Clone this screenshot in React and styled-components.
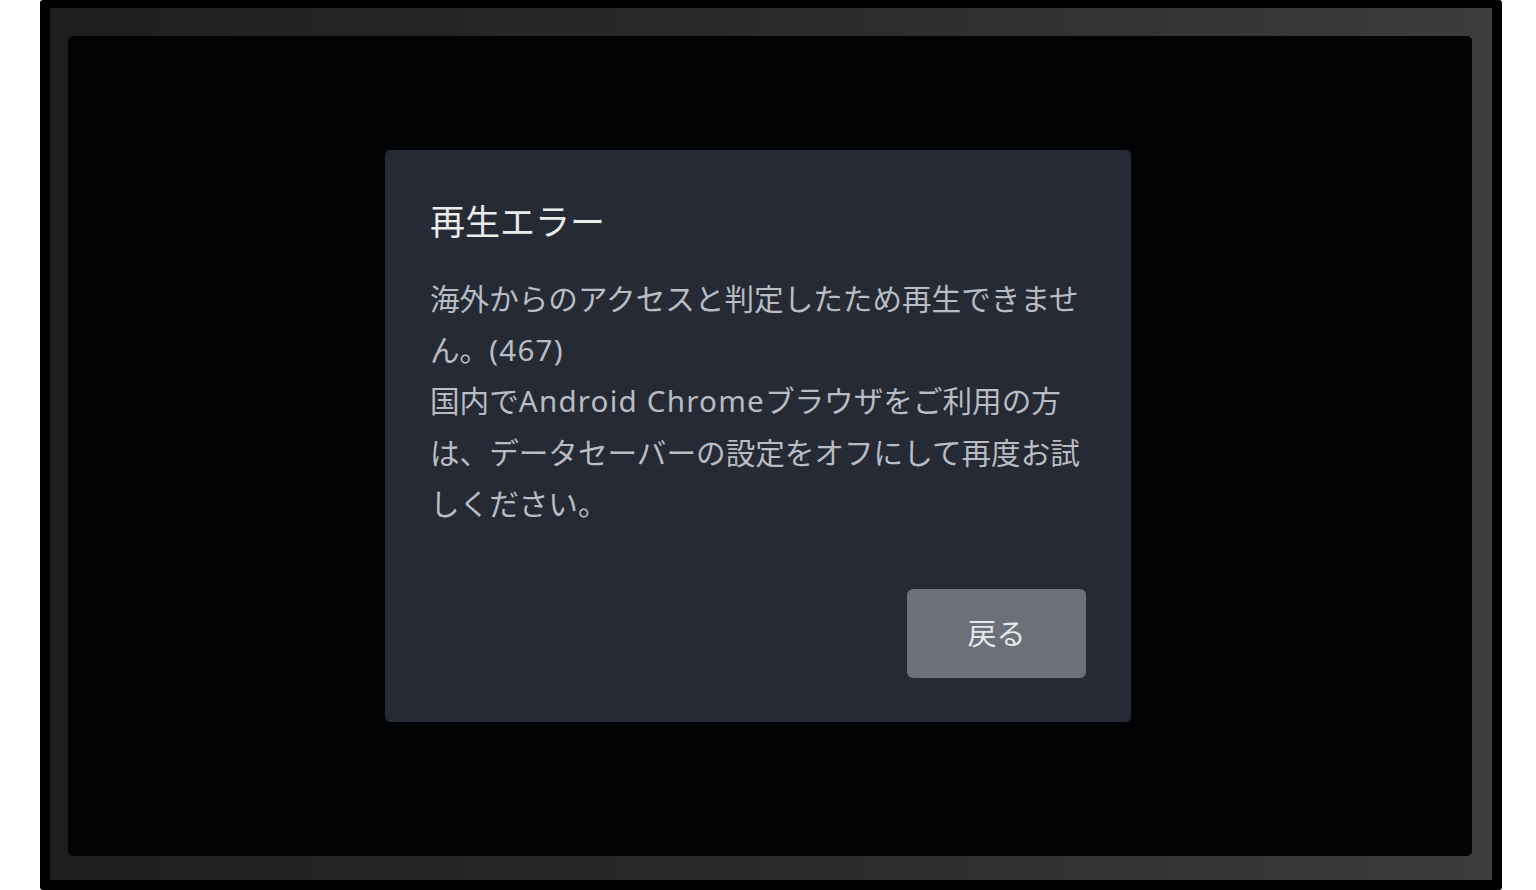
import React from "react"
import styled, { createGlobalStyle } from "styled-components"

const GlobalStyle = createGlobalStyle`
  html, body {
    margin: 0;
    padding: 0;
    background: #ffffff;
    overflow: hidden;
  }
  body {
    font-family: "Noto Sans", "Noto Sans CJK JP", sans-serif;
  }
`

const Page = styled.div`
  width: 1536px;
  height: 890px;
  padding-left: 40px;
  box-sizing: border-box;
`

const Device = styled.div`
  width: 1462px;
  height: 890px;
  box-sizing: border-box;
  background: #000;
  padding: 8px 10px 10px 10px;
  border-radius: 3px;
`

const Bezel = styled.div`
  height: 100%;
  box-sizing: border-box;
  padding: 28px 20px 24px 18px;
  background: linear-gradient(90deg, #1e1e1e 0%, #2a2a29 50%, #3c3c3a 100%);
`

const Screen = styled.div`
  height: 100%;
  box-sizing: border-box;
  background: #010203;
  border-radius: 5px;
  padding: 114px 0 0 317px;
`

const Dialog = styled.div`
  width: 746px;
  height: 572px;
  box-sizing: border-box;
  background: #252a34;
  border-radius: 5px;
  padding: 42px 45px 44px 45px;
  display: flex;
  flex-direction: column;
`

const Title = styled.h2`
  margin: 0;
  font-family: "Noto Sans CJK JP", sans-serif;
  font-size: 35px;
  font-weight: 400;
  line-height: 56px;
  color: #ebebec;
`

const Message = styled.p`
  margin: 25px 0 0 0;
  font-family: "Noto Sans CJK JP", sans-serif;
  font-size: 29.6px;
  line-height: 50.7px;
  color: #b9bcc3;
  font-weight: 400;
`

const Latin = styled.span`
  font-family: "Noto Sans", "Noto Sans CJK JP", sans-serif;
  letter-spacing: 1.2px;
`

const Actions = styled.div`
  margin-top: auto;
  display: flex;
  justify-content: flex-end;
`

const BackButton = styled.button`
  width: 179px;
  height: 89px;
  border: none;
  border-radius: 6px;
  background: #6b7079;
  color: #e6e7e9;
  font-family: "Noto Sans CJK JP", sans-serif;
  font-size: 29px;
  font-weight: 400;
  padding: 0 0 4px 0;
  cursor: pointer;
`

export default function App() {
  return (
    <>
      <GlobalStyle />
      <Page>
        <Device>
          <Bezel>
            <Screen>
              <Dialog>
                <Title>再生エラー</Title>
                <Message>
                  海外からのアクセスと判定したため再生できません。<Latin>(467)</Latin>
                  <br />
                  国内で<Latin>Android Chrome</Latin>ブラウザをご利用の方は、データセーバーの設定をオフにして再度お試しください。
                </Message>
                <Actions>
                  <BackButton>戻る</BackButton>
                </Actions>
              </Dialog>
            </Screen>
          </Bezel>
        </Device>
      </Page>
    </>
  )
}
